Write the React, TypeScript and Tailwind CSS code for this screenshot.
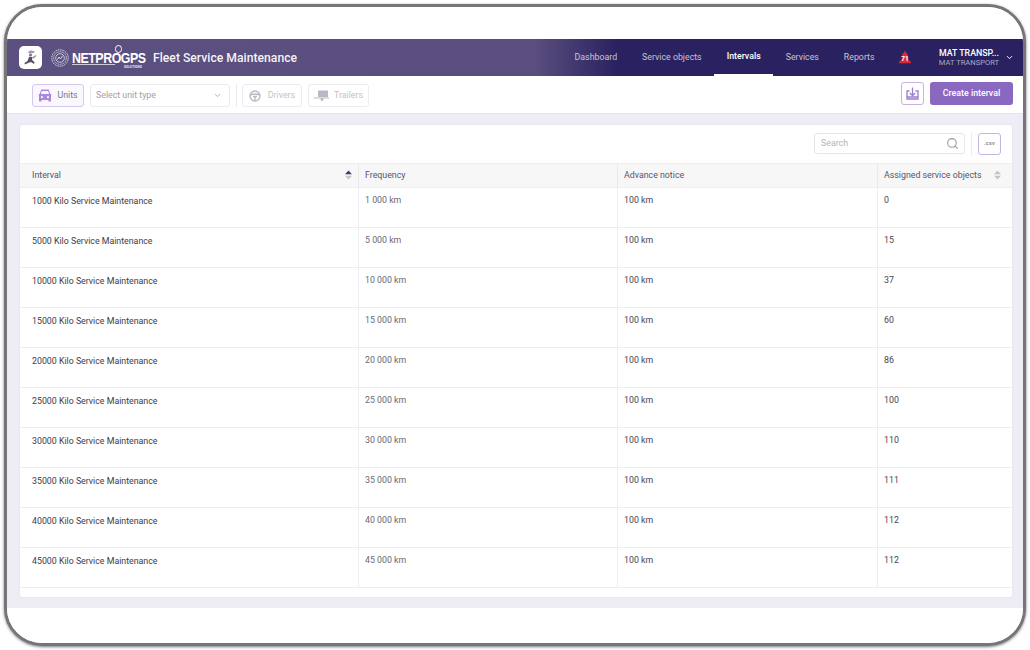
import { ChevronDown, Search } from "lucide-react";

const rows = [
  { name: "1000 Kilo Service Maintenance", freq: "1 000 km", count: 0 },
  { name: "5000 Kilo Service Maintenance", freq: "5 000 km", count: 15 },
  { name: "10000 Kilo Service Maintenance", freq: "10 000 km", count: 37 },
  { name: "15000 Kilo Service Maintenance", freq: "15 000 km", count: 60 },
  { name: "20000 Kilo Service Maintenance", freq: "20 000 km", count: 86 },
  { name: "25000 Kilo Service Maintenance", freq: "25 000 km", count: 100 },
  { name: "30000 Kilo Service Maintenance", freq: "30 000 km", count: 110 },
  { name: "35000 Kilo Service Maintenance", freq: "35 000 km", count: 111 },
  { name: "40000 Kilo Service Maintenance", freq: "40 000 km", count: 112 },
  { name: "45000 Kilo Service Maintenance", freq: "45 000 km", count: 112 },
];

const navItems = ["Dashboard", "Service objects", "Intervals", "Services", "Reports"];

function SortIcon({ active }: { active?: boolean }) {
  return (
    <svg width="7" height="10" viewBox="0 0 7 10" className="shrink-0">
      <path d="M3.5 0.5 L7 4.2 H0 Z" fill={active ? "#3f3a6b" : "#c4c4cc"} />
      <path d="M3.5 9.5 L7 5.8 H0 Z" fill="#c4c4cc" />
    </svg>
  );
}

function AppIcon() {
  return (
    <div className="w-[23px] h-[23px] rounded-[5px] bg-white flex items-center justify-center">
      <svg width="17" height="17" viewBox="0 0 17 17">
        <path d="M6 3.5 Q7 1 9.5 1.5 L13 2.5 L11.5 4 L7.5 4.5 Z" fill="#a98fdc" />
        <circle cx="8.5" cy="6" r="1.6" fill="#8a7a72" />
        <path d="M7 8 L10.5 8 L10 11 L12.5 13 L12 15 L9 13 L6 14 L3 15.5 L2.5 14 L5.5 12 Z" fill="#56505c" />
        <path d="M10.5 8 L14 6 L14.5 7 L11 10 Z" fill="#a89a86" />
      </svg>
    </div>
  );
}

function NetproLogo() {
  return (
    <div className="flex items-center gap-[3px]">
      <svg width="18" height="18" viewBox="0 0 18 18" fill="none" stroke="#e8e6f0">
        <circle cx="9" cy="9" r="8.2" strokeWidth="1" strokeDasharray="1.2 0.7" />
        <circle cx="9" cy="9" r="6.3" strokeWidth="0.7" strokeDasharray="2 0.6" />
        <circle cx="9" cy="9" r="4.3" strokeWidth="0.8" />
        <path d="M6.5 10.5 L8 8 L9.5 10 L11.5 6.8" strokeWidth="0.9" />
      </svg>
      <div className="relative w-[73px] h-[14px]">
        <span className="absolute left-0 top-0 origin-left scale-x-[0.8] text-white font-bold text-[15.5px] leading-[14px] tracking-[-0.6px] whitespace-nowrap font-['Liberation_Sans',sans-serif]">
          NETPROGPS
        </span>
        <span className="absolute left-0 w-[43px] top-[13px] h-px bg-white/70" />
        <span className="absolute left-[43px] top-[-6px] w-[7px] h-[8px] rounded-full border border-white" />
        <span className="absolute right-[3px] top-[14px] text-white/90 text-[3px] leading-[4px] font-bold tracking-[0.2px]">
          SOLUTIONS
        </span>
      </div>
    </div>
  );
}

function CarIcon() {
  return (
    <svg width="14" height="13" viewBox="0 0 14 13" fill="#a88ad8">
      <path d="M3.3 0.5 H10.7 L12.3 5 H13.3 V6 L13 6.4 V11 H13 V12.5 H10.5 V11 H3.5 V12.5 H1 V6.4 L0.7 6 V5 H1.7 Z M3.8 2 L3 5 H11 L10.2 2 Z M3 7.3 V9 H5 V7.3 Z M9 7.3 V9 H11 V7.3 Z" fillRule="evenodd" />
    </svg>
  );
}

function SteeringIcon() {
  return (
    <svg width="12" height="12" viewBox="0 0 12 12" fill="none" stroke="#b9b9c4" strokeWidth="1.4">
      <circle cx="6" cy="6" r="5" />
      <path d="M1.2 5 Q6 3 10.8 5 M4 6.5 H8 M6 7 V10.8" />
    </svg>
  );
}

function TrailerIcon() {
  return (
    <svg width="15" height="11" viewBox="0 0 15 11" fill="#b9b9c4">
      <rect x="4" y="0.5" width="10" height="6.5" />
      <rect x="0" y="7.5" width="15" height="1" />
      <circle cx="8" cy="9.5" r="1.4" />
    </svg>
  );
}

function BellIcon() {
  return (
    <div className="relative w-[12px] h-[13px]">
      <svg width="12" height="13" viewBox="0 0 12 13" fill="#d92b34">
        <circle cx="6" cy="1.2" r="1" />
        <path d="M6 1.5 C8.6 1.5 9 4 9.2 6.5 C9.4 8.5 10.4 9.6 12 11 V12.3 H0 V11 C1.6 9.6 2.6 8.5 2.8 6.5 C3 4 3.4 1.5 6 1.5 Z" />
      </svg>
      <span className="absolute left-0 right-0 top-[5px] text-center text-white text-[6.5px] leading-[7px] font-bold">
        71
      </span>
    </div>
  );
}

function DownloadIcon() {
  return (
    <svg width="13" height="13" viewBox="0 0 13 13" fill="none" stroke="#9a7cd0" strokeWidth="1.3">
      <path d="M3.5 4 H1 V12 H12 V4 H9.5" />
      <path d="M6.5 0.5 V8.5 M3.8 6 L6.5 8.7 L9.2 6" />
      <path d="M1 10 H12" />
    </svg>
  );
}

export default function App() {
  return (
    <div className="w-[1030px] h-[650px] bg-white p-1 font-['Roboto',sans-serif] overflow-hidden">
      <div className="w-[1022px] h-[642px] rounded-[38px] border-[3px] border-[#77757a] shadow-[0_1px_3px_#777] overflow-hidden bg-white flex flex-col">
        <div className="h-8 shrink-0 bg-white" />

        <header className="h-[37px] shrink-0 flex items-center bg-[linear-gradient(90deg,#5b5080_0%,#5a4e7e_52%,#2a2260_60%,#2a2260_100%)]">
          <div className="pl-3 flex items-center gap-[9px]">
            <AppIcon />
            <NetproLogo />
            <span className="ml-[-1px] mt-[1px] text-white/95 text-[12.2px] font-medium whitespace-nowrap">
              Fleet Service Maintenance
            </span>
          </div>
          <nav className="ml-auto flex items-stretch h-full text-[8.8px]">
            {navItems.map((item) => (
              <div
                key={item}
                className={
                  item === "Intervals"
                    ? "px-[12.5px] flex items-center text-white font-medium border-b-2 border-white"
                    : "px-[12.5px] flex items-center text-[#c6c3d8]"
                }
              >
                {item}
              </div>
            ))}
          </nav>
          <div className="ml-[12px] mr-[27px]">
            <BellIcon />
          </div>
          <div className="w-[62px] text-center leading-[10px]">
            <div className="text-white text-[8.8px] font-medium whitespace-nowrap">MAT TRANSP...</div>
            <div className="text-[#aaa7c0] text-[7.6px] whitespace-nowrap">MAT TRANSPORT</div>
          </div>
          <ChevronDown className="ml-[5px] mr-[9px] text-white" size={9} strokeWidth={2.5} />
        </header>

        <div className="h-[37px] shrink-0 bg-white flex items-center pl-[25px] pr-[10px] text-[8.8px]">
          <div className="mt-[2px] flex items-center">
            <button className="h-[23px] w-[52px] rounded-[3px] border border-[#d5c8ec] bg-[#faf8fe] flex items-center justify-center gap-[5px] text-[#7a7788]">
              <CarIcon />
              Units
            </button>
            <div className="ml-[6px] h-[23px] w-[140px] rounded-[3px] border border-[#eaeaf0] flex items-center justify-between px-[5px] pr-[7px] text-[#a0a0a8]">
              Select unit type
              <ChevronDown size={9} className="text-[#999]" />
            </div>
            <div className="ml-[6px] h-[23px] w-px bg-[#e9e9ee]" />
            <button className="ml-[5px] h-[23px] w-[60px] rounded-[3px] border border-[#ececf0] flex items-center justify-center gap-[7px] text-[#c2c2c8]">
              <SteeringIcon />
              Drivers
            </button>
            <button className="ml-[6px] h-[23px] w-[61px] rounded-[3px] border border-[#ececf0] flex items-center justify-center gap-[5px] text-[#c2c2c8]">
              <TrailerIcon />
              Trailers
            </button>
          </div>
          <div className="ml-auto mb-[2px] flex items-center">
            <button className="h-[23px] w-[23px] rounded-[3px] border border-[#c5b3e4] flex items-center justify-center">
              <DownloadIcon />
            </button>
            <button className="ml-[6px] h-[23px] w-[83px] rounded-[3px] bg-[#8a68c0] text-white font-medium">
              Create interval
            </button>
          </div>
        </div>

        <main className="h-[495px] shrink-0 bg-[#eeedf5] pt-[11px] px-[13px] border-t border-[#e6e5ee]">
          <div className="w-[992px] h-[472px] bg-white rounded-[3px] shadow-[0_0_2px_rgba(0,0,0,0.08)] flex flex-col">
            <div className="h-[38px] shrink-0 flex items-center justify-end pr-[11px] pb-[1px]">
              <div className="w-[151px] h-[21px] rounded-[3px] border border-[#e6e6ea] flex items-center justify-between pl-[6px] pr-[5px] text-[8.8px] text-[#b4b4ba]">
                Search
                <Search size={13} className="text-[#9a9aa8]" />
              </div>
              <div className="ml-[6px] h-[22px] w-px bg-[#ececf0]" />
              <div className="ml-[6px] w-[23px] h-[22px] rounded-[3px] border border-[#c5b3e4] flex items-center justify-center text-[5.5px] font-bold text-[#8a8a98] tracking-[0.3px]">
                .csv
              </div>
            </div>

            <div className="grid grid-cols-[339px_259px_260px_134px] h-[24.5px] shrink-0 bg-[#f7f7f8] border-y border-[#eeeef1] text-[8.8px] text-[#55556a] items-stretch">
              <div className="pl-3 pr-[6px] flex items-center justify-between border-r border-[#e9e9ec]">
                Interval
                <SortIcon active />
              </div>
              <div className="pl-[6px] flex items-center border-r border-[#e9e9ec]">Frequency</div>
              <div className="pl-[6px] flex items-center border-r border-[#e9e9ec]">Advance notice</div>
              <div className="pl-[6px] pr-[11px] flex items-center justify-between">
                Assigned service objects
                <SortIcon />
              </div>
            </div>

            {rows.map((row) => (
              <div
                key={row.name}
                className="grid grid-cols-[339px_259px_260px_134px] h-[40.1px] shrink-0 border-b border-[#eeeef1] text-[8.8px] text-[#45454f]"
              >
                <div className="pl-3 pt-[7px] border-r border-[#eeeef1] text-[#3c3c46]">{row.name}</div>
                <div className="pl-[6px] pt-[6px] border-r border-[#eeeef1] text-[#6a6a72]">{row.freq}</div>
                <div className="pl-[6px] pt-[6px] border-r border-[#eeeef1]">100 km</div>
                <div className="pl-[6px] pt-[6px]">{row.count}</div>
              </div>
            ))}
          </div>
        </main>

        <div className="flex-1 bg-white" />
      </div>
    </div>
  );
}
